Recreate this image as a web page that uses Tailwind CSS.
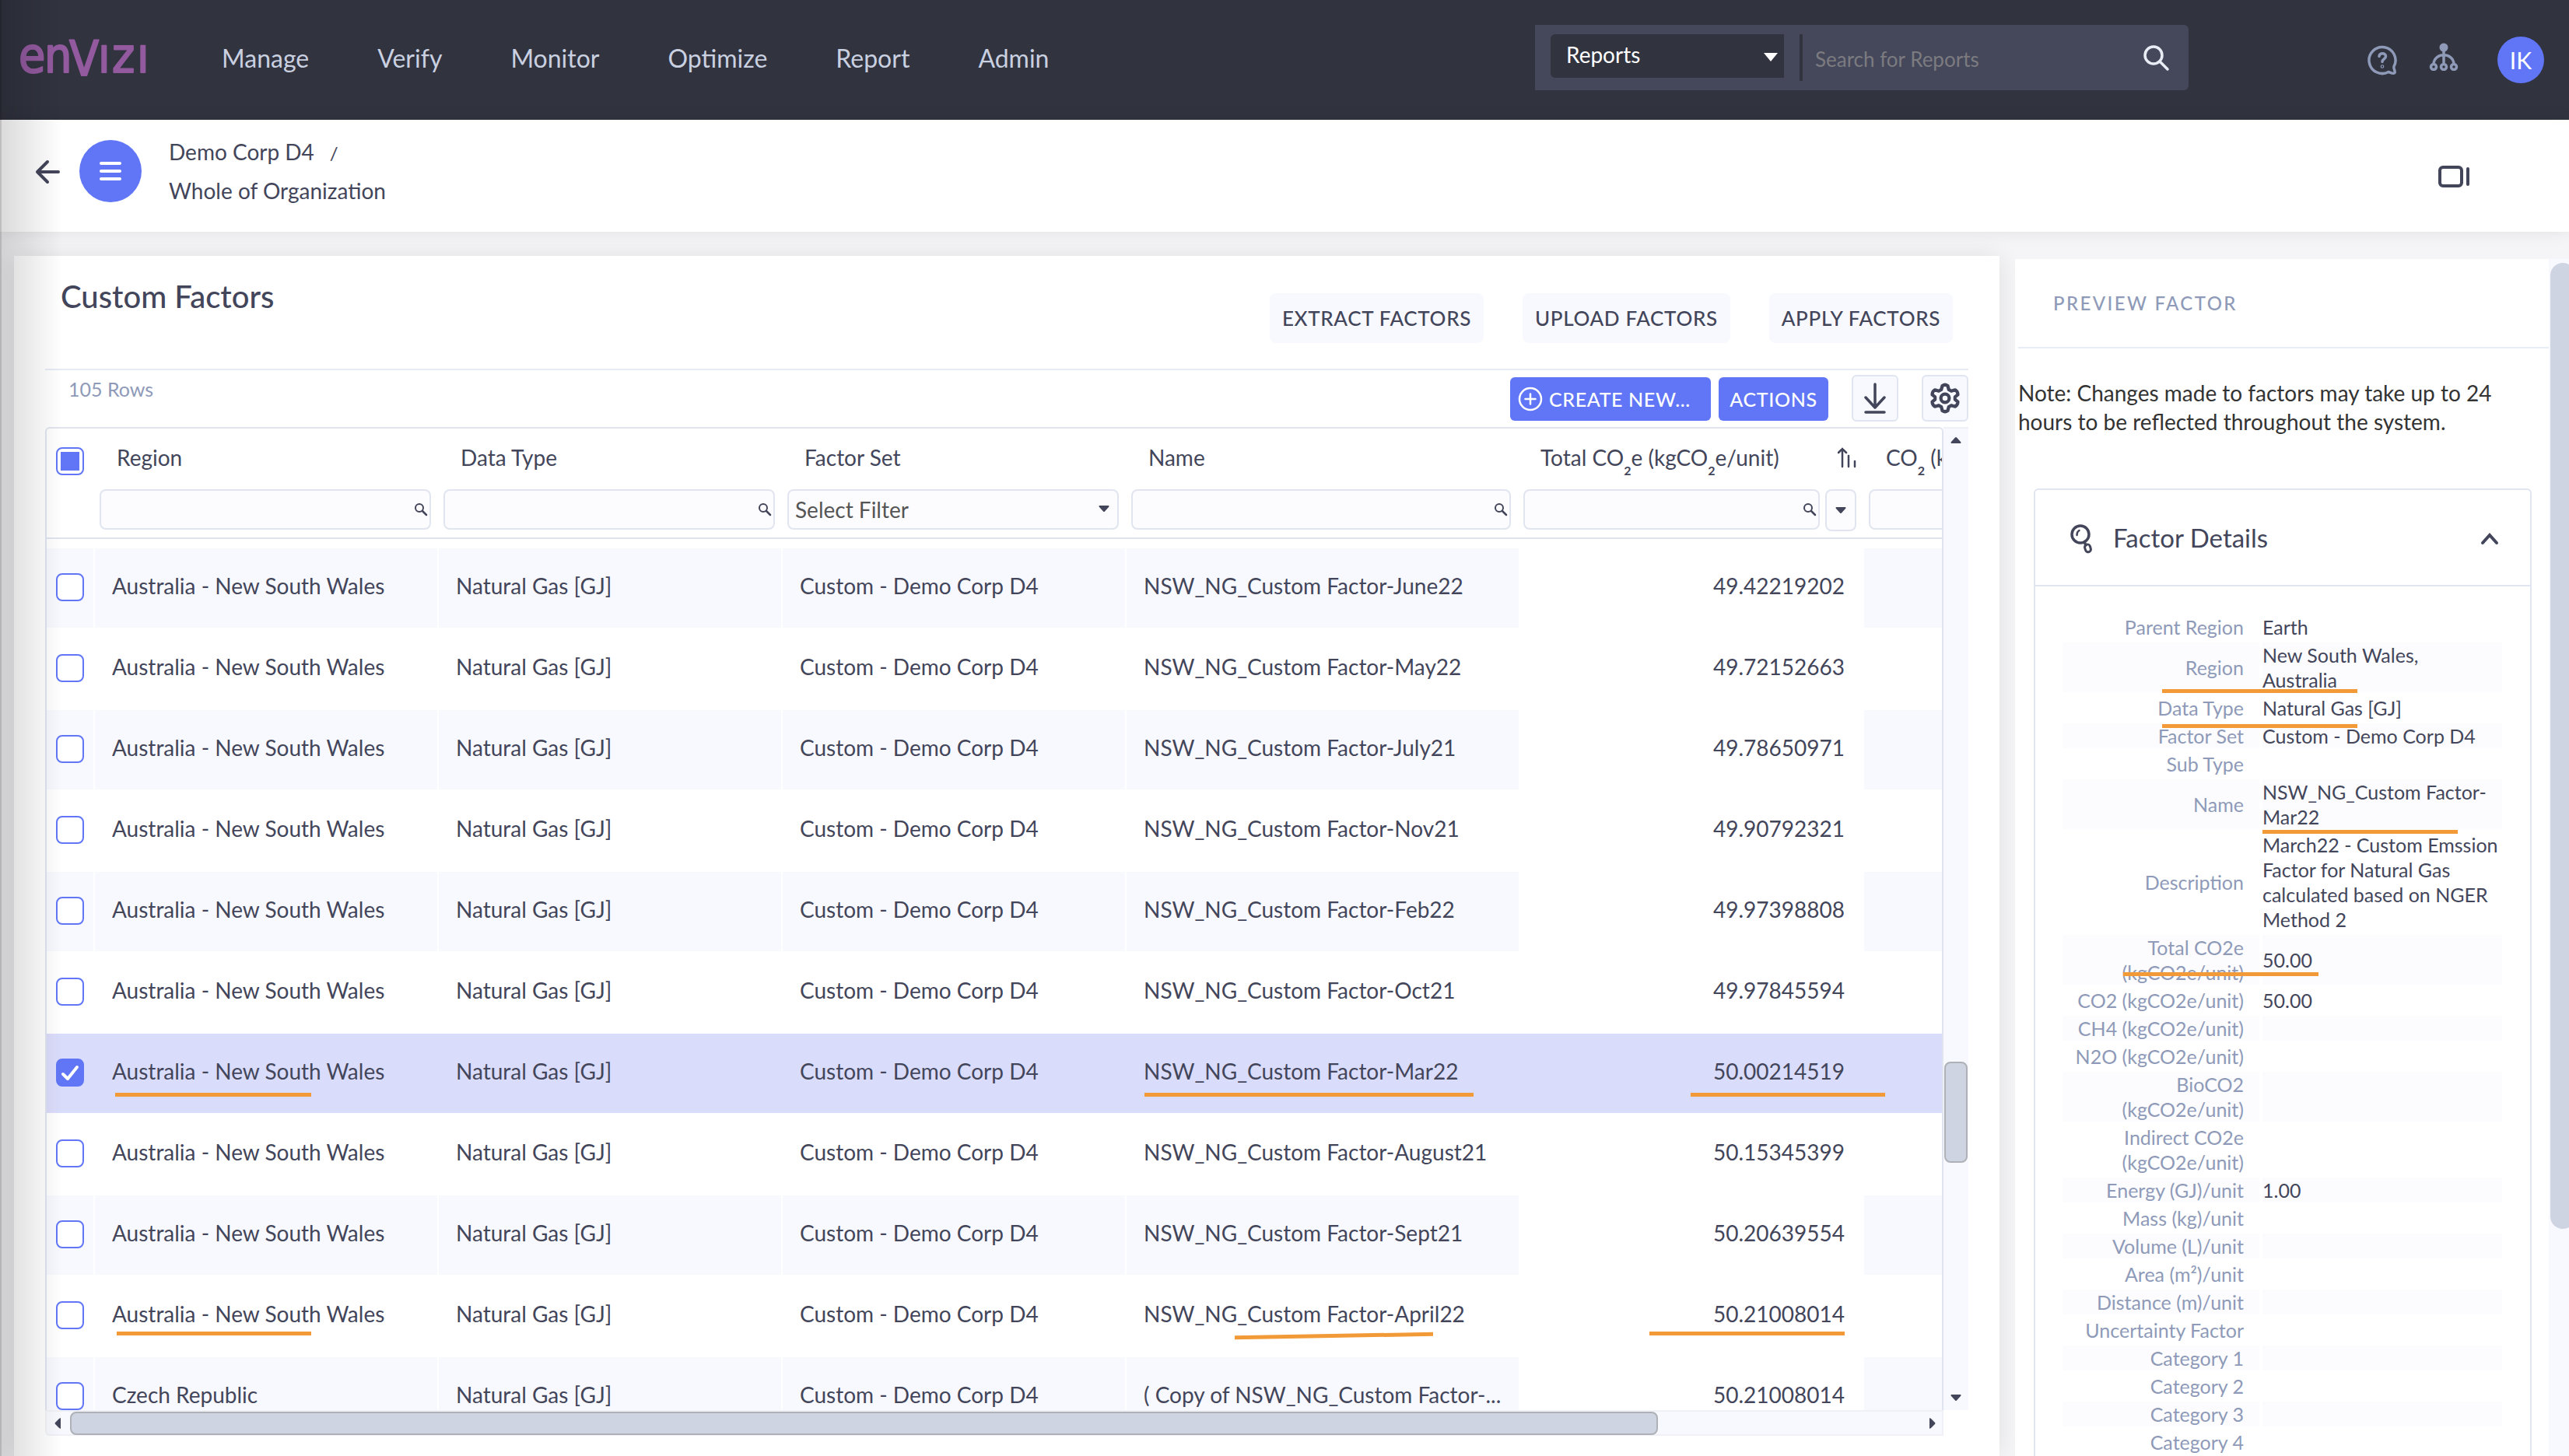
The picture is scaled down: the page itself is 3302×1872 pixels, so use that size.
<!DOCTYPE html>
<html lang="en">
<head>
<meta charset="utf-8">
<title>Custom Factors</title>
<script src="https://cdn.jsdelivr.net/npm/@tailwindcss/browser@4"></script>
</head>
<body class="h-screen overflow-hidden bg-[#f5f5f8] font-[Lato,sans-serif] text-[28px] leading-8 text-[#43465a]">
<svg class="hidden" aria-hidden="true">
  <symbol id="mag" viewBox="0 0 18 18"><circle cx="7" cy="7" r="5" fill="none" stroke="currentColor" stroke-width="2"/><path d="M11 11l5 5" stroke="currentColor" stroke-width="2.5" stroke-linecap="round"/></symbol>
  <symbol id="down" viewBox="0 0 14 8"><path d="M1 0h12q1 1 0 2L8 7.500q-1 1-2 0L1 2q-1-1 0-2z" fill="currentColor"/></symbol>
</svg>
<div class="relative flex h-full flex-col">

  <header class="flex h-[154px] shrink-0 items-center bg-[#31333f] text-[#c9d0e0]">
    <a href="#" aria-label="enVizi" class="ml-4">
      <svg class="h-20 w-[190px] overflow-visible" viewBox="16 35 190 80" fill="#935a9f" stroke="#935a9f" stroke-width="2" stroke-linejoin="round" font-family="'Liberation Sans Narrow','DejaVu Sans Condensed',sans-serif" font-size="62">
        <text x="24 57 89 126 144 176" y="91 91 95 91 91 91">enVızı</text>
      </svg>
    </a>
    <nav class="-mt-1 ml-[79px] flex gap-[88px] text-[32px]">
      <a href="#">Manage</a><a href="#">Verify</a><a href="#">Monitor</a><a href="#">Optimize</a><a href="#">Report</a><a href="#">Admin</a>
    </nav>
    <form class="mr-[229px] mb-[6px] ml-auto flex h-[84px] w-[840px] items-center rounded-r-md bg-[#45485b] pr-6 pl-5">
      <div class="relative mb-1 h-14 w-[300px]">
        <select aria-label="Search in" class="h-full w-full appearance-none rounded-l-md bg-[#31333f] pb-1 pl-5 text-white"><option>Reports</option></select>
        <svg class="absolute top-6 right-2 h-3 w-[18px] text-white" viewBox="0 0 18 12"><path d="M0 0h18L9 11z" fill="currentColor"/></svg>
      </div>
      <div class="mr-4 ml-5 h-[60px] w-1 bg-[#31333f]"></div>
      <input type="text" aria-label="Search for Reports" placeholder="Search for Reports" class="min-w-0 flex-1 pt-1 text-[26px] placeholder:text-[#7b7b80]">
      <button type="button" aria-label="Search"><svg class="size-9" viewBox="0 0 36 36" fill="none" stroke="#e8ecf4" stroke-width="3.500"><circle cx="15" cy="15" r="11"/><path d="M23 23l10 10" stroke-linecap="round"/></svg></button>
    </form>
    <div class="mr-8 flex items-center">
      <button aria-label="Help" class="mr-10"><svg class="size-10" viewBox="0 0 40 40" fill="none" stroke="#8e9ab8" stroke-width="3.500" stroke-linecap="round" stroke-linejoin="round"><path d="M28 35.500a17 17 0 1 1 7-7c-1 2 2 6 1 8s-5 0-8-1z"/><path d="M16 15.500c0-5 8.500-5 8.500 0 0 3.500-4.500 3-4.500 7"/><circle cx="20" cy="28.500" r=".6"/></svg></button>
      <button aria-label="Hierarchy" class="mr-[50px] mb-2"><svg class="h-9 w-[38px]" viewBox="0 0 38 36" fill="none" stroke="#8e9ab8" stroke-width="3.500"><circle cx="19" cy="6" r="5.500" fill="#8e9ab8" stroke="none"/><path d="M19 8v18M6 27c1-15 25-15 26 0"/><g fill="#31333f"><circle cx="6" cy="31" r="3.500"/><circle cx="19" cy="31" r="3.500"/><circle cx="32" cy="31" r="3.500"/></g></svg></button>
      <button class="size-[60px] rounded-full bg-[#6076f6] text-[30px] text-white">IK</button>
    </div>
  </header>

  <div class="z-10 flex h-36 shrink-0 items-start bg-white pt-[26px] shadow-[0_0_20px_rgba(0,0,0,0.09)]">
    <a href="#" aria-label="Back" class="mt-[25px] ml-[45px]"><svg class="h-8 w-[33px]" viewBox="0 0 33 32" fill="none" stroke="#43465a" stroke-width="4" stroke-linecap="round" stroke-linejoin="round"><path d="M30 16H3M16 3L3 16l13 13"/></svg></a>
    <button aria-label="Menu" class="ml-6 flex size-20 flex-col items-center justify-center gap-[6px] rounded-full bg-[#6076f6]"><span class="h-1 w-7 rounded-sm bg-white"></span><span class="h-1 w-7 rounded-sm bg-white"></span><span class="h-1 w-7 rounded-sm bg-white"></span></button>
    <div class="-mt-[10px] ml-[35px] leading-[50px]">
      <div><a href="#">Demo Corp D4</a><span class="ml-5 text-2xl">/</span></div>
      <div>Whole of Organization</div>
    </div>
    <button aria-label="Toggle side panel" class="mt-8 mr-[125px] ml-auto"><svg class="h-[30px] w-11" viewBox="0 0 44 30" fill="none" stroke="#43465a" stroke-width="4" stroke-linecap="round"><rect x="3" y="3" width="28" height="24" rx="4"/><path d="M39 5v20"/></svg></button>
  </div>

  <div class="flex min-h-0 flex-1">
    <main class="mt-[31px] ml-[18px] flex min-w-0 flex-1 flex-col bg-white pr-10 pb-[26px] pl-10 shadow-[0_0_30px_rgba(0,0,0,0.09)]">
      <div class="flex h-[145px] shrink-0 items-start justify-between">
        <h1 class="mt-[30px] ml-5 text-[40px] leading-[44px] font-medium">Custom Factors</h1>
        <div class="mt-12 mr-5 flex gap-[50px] text-[26px] font-medium tracking-wide">
          <button class="h-16 rounded-lg bg-[#f8f9fe] px-4">EXTRACT FACTORS</button>
          <button class="h-16 rounded-lg bg-[#f8f9fe] px-4">UPLOAD FACTORS</button>
          <button class="h-16 rounded-lg bg-[#f8f9fe] px-4">APPLY FACTORS</button>
        </div>
      </div>
      <div class="flex h-[75px] shrink-0 items-start border-t-2 border-[#e6eaf5]">
        <p class="mt-2 ml-[30px] text-[25px] text-[#8e9ab8]">105 Rows</p>
        <div class="mt-[6px] ml-auto flex items-center text-[25px] font-medium tracking-wide text-white">
          <button class="mt-[2px] flex h-14 w-[258px] items-center gap-2 rounded-md bg-[#6076f6] pl-[10px]"><svg class="size-[32px]" viewBox="0 0 32 32" fill="none" stroke="#fff" stroke-width="2.500" stroke-linecap="round"><circle cx="16" cy="16" r="14"/><path d="M16 9.500v13M9.500 16h13"/></svg>CREATE NEW...</button>
          <button class="mt-[2px] ml-[10px] h-14 w-[141px] rounded-md bg-[#6076f6]">ACTIONS</button>
          <button aria-label="Download" class="ml-[30px] flex size-[60px] items-center justify-center rounded-md border-2 border-[#e0e5f0] bg-[#f8f9fe]"><svg class="h-10 w-8" viewBox="0 0 32 40" fill="none" stroke="#43465a" stroke-width="3.500" stroke-linecap="round" stroke-linejoin="round"><path d="M16 2v29M4 19l12 13 12-13M4 38h24"/></svg></button>
          <button aria-label="Settings" class="ml-[30px] flex size-[60px] items-center justify-center rounded-md border-2 border-[#e0e5f0] bg-[#f8f9fe]"><svg class="size-[46px]" viewBox="0 0 24 24" fill="none" stroke="#43465a" stroke-width="2.200" stroke-linejoin="round"><circle cx="12" cy="12" r="2.800"/><path d="M10.200 3.600Q12 2.400 13.800 3.600L14.500 6.200L16.200 7.200L18.800 6.400Q20.600 7.500 20.600 9.600L18.700 11.200V12.800L20.600 14.400Q20.600 16.500 18.800 17.600L16.200 16.800L14.500 17.800L13.800 20.400Q12 21.600 10.200 20.400L9.500 17.800L7.800 16.800L5.200 17.600Q3.400 16.500 3.400 14.400L5.300 12.800V11.200L3.400 9.600Q3.400 7.500 5.200 6.400L7.800 7.200L9.500 6.200z"/></svg></button>
        </div>
      </div>
      <div class="flex min-h-0 flex-1">
        <div class="flex min-w-0 flex-1 flex-col">
          <div class="min-h-0 flex-1 overflow-hidden rounded-t-md border-x-2 border-t-2 border-[#e0e4ef]">
            <table class="w-full table-fixed border-separate border-spacing-0">
              <colgroup><col class="w-[62px]"><col class="w-[442px]"><col class="w-[442px]"><col class="w-[442px]"><col class="w-[504px]"><col class="w-[444px]"><col></colgroup>
              <thead class="text-left">
                <tr id="head"></tr>
              </thead>
              <tbody id="rows"><tr class="h-3"><td colspan="7"></td></tr></tbody>
            </table>
          </div>
          <div class="flex h-[33px] shrink-0 items-center rounded-bl-md border-2 border-[#f0f1f6] bg-[#f8f9fe]">
            <svg class="ml-[10px] h-[14px] w-2" viewBox="0 0 8 14"><path d="M8 0v14L6 13 1 8q-1-1 0-2L6 1z" fill="#43465a"/></svg>
            <div class="ml-3 h-[30px] w-[2041px] rounded-lg border-2 border-[#aeb1b6] bg-[#ced4e2]"></div>
            <svg class="mr-2 ml-auto h-[14px] w-2" viewBox="0 0 8 14"><path d="M0 0v14L2 13l5-5q1-1 0-2L2 1z" fill="#43465a"/></svg>
          </div>
        </div>
        <div class="mb-[33px] flex w-8 flex-col items-center border-t-2 border-[#f0f1f6] bg-[#f8f9fe]">
          <svg class="mt-[11px] h-2 w-[14px] rotate-180 text-[#43465a]"><use href="#down"/></svg>
          <div class="mt-[795px] h-[130px] w-[30px] rounded-lg border-2 border-[#aeb1b6] bg-[#ced4e2]"></div>
          <svg class="mt-auto mb-3 h-2 w-[14px] text-[#43465a]"><use href="#down"/></svg>
        </div>
      </div>
    </main>

    <aside class="mt-[35px] ml-5 flex w-[712px] shrink-0 bg-white">
      <div class="ml-1 min-w-0 flex-1 overflow-hidden">
        <h2 class="flex h-[115px] items-center border-b-2 border-[#e8ecf5] pl-[45px] text-2xl font-medium tracking-widest text-[#8e9ab8]">PREVIEW FACTOR</h2>
        <p class="mt-[39px] h-[141px] leading-[37px] text-[#333]">Note: Changes made to factors may take up to 24<br>hours to be reflected throughout the system.</p>
        <section class="mr-[22px] ml-5 rounded-md border-2 border-[#e0e5f0]">
          <h3 class="flex h-[124px] items-center border-b-2 border-[#e0e5f0] pr-10 pl-11 text-[33px]">
            <svg class="mt-1 mr-6 h-[38px] w-8" viewBox="0 0 32 38" fill="none" stroke="#43465a" stroke-width="3.500" stroke-linecap="round"><circle cx="14" cy="13" r="11"/><path d="M9.500 14c0-3 1-5 3-6" stroke-width="2.500"/><path d="M19 23l2 4"/><rect x="20" y="26" width="7" height="10" rx="3.500" transform="rotate(-18 23 31)" stroke-width="3"/></svg>
            Factor Details
            <button aria-label="Collapse" class="mt-1 ml-auto"><svg class="h-4 w-6" viewBox="0 0 24 16" fill="none" stroke="#43465a" stroke-width="4" stroke-linecap="round"><path d="M3 13l9-10 9 10"/></svg></button>
          </h3>
          <table class="mt-8 ml-[31px] w-[573px] table-fixed border-separate border-spacing-x-1 border-spacing-y-1 text-[25px] leading-8">
            <colgroup><col class="w-[253px]"><col></colgroup>
            <tbody id="details"></tbody>
          </table>
        </section>
      </div>
      <div class="w-[26px] shrink-0 overflow-hidden bg-[#f8f9fe] pt-[5px]"><div class="ml-[2px] h-[1242px] w-8 rounded-full bg-[#ced4e2]"></div></div>
    </aside>
  </div>
  <div class="pointer-events-none absolute inset-y-0 left-0 z-20 w-20 border-l-2 border-black/25 bg-linear-to-r from-black/14 to-transparent"></div>
</div>
<script>
const mag = (pos) => `<svg class="${pos} absolute top-[17px] size-[18px]"><use href="#mag"/></svg>`;
const box = "h-[52px] w-full rounded-lg border-2 border-[#e0e5f0] bg-[#fcfcfe]";
const textFilter = (n) => `<div class="relative flex-1"><input type="text" aria-label="Filter ${n}" class="${box} pr-8 pl-2">${mag("right-1")}</div>`;
const sub = '<sub class="relative top-3 align-baseline text-base leading-none font-bold">2</sub>';
const cols = [
  ["Region", textFilter("Region")],
  ["Data Type", textFilter("Data Type")],
  ["Factor Set", `<div class="relative flex-1"><select aria-label="Filter Factor Set" class="${box} appearance-none pl-2 text-[#555]"><option>Select Filter</option></select><svg class="absolute top-[21px] right-3 h-2 w-[14px]"><use href="#down"/></svg></div>`],
  ["Name", textFilter("Name")],
  [`Total CO${sub}e (kgCO${sub}e/unit)<svg class="ml-auto h-7 w-6" viewBox="0 0 24 28" fill="none" stroke="#43465a" stroke-width="2.500" stroke-linecap="round"><path d="M6 26V3M1 8l5-5 5 5M14 26V12M22 26v-7"/></svg>`,
   textFilter("Total") + `<button aria-label="Filter options" class="ml-[7px] flex h-[54px] w-10 items-center justify-center rounded-lg border-2 border-[#e0e5f0] bg-[#fcfcfe]"><svg class="h-2 w-[14px]"><use href="#down"/></svg></button>`],
  [`CO${sub} (kgCO${sub}e/unit)`, `<input type="text" aria-label="Filter CO2" class="h-[52px] w-[350px] shrink-0 rounded-lg border-2 border-[#e0e5f0] bg-[#fcfcfe]">`]
];
document.getElementById("head").innerHTML =
  `<th class="h-[142px] border-b-2 border-[#e0e4ef] pt-6 pl-3 align-top"><span class="relative block size-9"><input type="checkbox" aria-label="Select all" class="block size-9 appearance-none rounded-lg border-2 border-[#6076f6] bg-white"><span class="pointer-events-none absolute inset-[6px] bg-[#6076f6]"></span></span></th>` +
  cols.map(([label, filter]) => `<th class="h-[142px] overflow-hidden border-b-2 border-[#e0e4ef] pt-[17px] pr-2.5 pl-1.5 align-top font-normal"><div class="mb-[21px] flex h-10 items-center pl-[22px] whitespace-nowrap"><span>${label.split("<svg")[0]}</span>${label.includes("<svg") ? "<svg" + label.split("<svg")[1] : ""}</div><div class="flex h-[52px]">${filter}</div></th>`).join("");

const nsw = "Australia - New South Wales", f = "NSW_NG_Custom Factor-";
const data = [
  [nsw, f + "June22", "49.42219202"], [nsw, f + "May22", "49.72152663"], [nsw, f + "July21", "49.78650971"],
  [nsw, f + "Nov21", "49.90792321"], [nsw, f + "Feb22", "49.97398808"], [nsw, f + "Oct21", "49.97845594"],
  [nsw, f + "Mar22", "50.00214519"], [nsw, f + "August21", "50.15345399"], [nsw, f + "Sept21", "50.20639554"],
  [nsw, f + "April22", "50.21008014"], ["Czech Republic", "( Copy of NSW_NG_Custom Factor-...", "50.21008014"]
];
const mark = (c) => `<span class="absolute h-[5px] bg-[#f19a37] ${c}"></span>`;
const marks = {
  6: [mark("top-[76px] left-[26px] w-[252px]"), mark("top-[76px] left-[23px] w-[423px]"), mark("top-[76px] left-[221px] w-[250px]")],
  9: [mark("top-[71px] left-[28px] w-[250px]"), mark("top-[74px] left-[139px] w-[255px] -rotate-1"), mark("top-[71px] left-[168px] w-[251px]")]
};
document.getElementById("rows").innerHTML += data.map(([region, name, total], i) => {
  const on = i === 6, m = marks[i] || ["", "", ""];
  const bg = on ? "bg-[#dadcfb]" : i % 2 ? "bg-white" : "bg-[#f8f9fe]";
  const td = `relative h-[104px] border-b-2 border-b-white pb-1.5 pl-[22px] whitespace-nowrap ${bg}`;
  const sep = on ? "" : "border-r-2 border-r-white";
  const tick = on ? '<svg class="pointer-events-none absolute inset-0" viewBox="0 0 36 36" fill="none" stroke="#fff" stroke-width="4" stroke-linecap="round" stroke-linejoin="round"><path d="M9 20l6 6 12-15"/></svg>' : "";
  return `<tr><td class="h-[104px] border-b-2 border-b-white pb-[2px] pl-3 ${bg} ${sep}"><span class="relative block size-9"><input type="checkbox" aria-label="Select ${name}" ${on ? "checked" : ""} class="block size-9 appearance-none rounded-lg border-2 border-[#6076f6] bg-white checked:bg-[#6076f6]">${tick}</span></td>` +
    `<td class="${td} ${sep}">${region}${m[0]}</td><td class="${td} ${sep}">Natural Gas [GJ]</td><td class="${td} ${sep}">Custom - Demo Corp D4</td><td class="${td}">${name}${m[1]}</td>` +
    `<td class="relative z-10 h-[104px] border-b-2 border-b-white pr-[25px] pb-1.5 text-right ${on ? bg : "bg-white"}">${total}${m[2]}</td><td class="${td}"></td></tr>`;
}).join("");

const line = (c) => `<span class="absolute z-10 h-[5px] w-[251px] bg-[#f19a37] ${c}"></span>`;
document.getElementById("details").innerHTML = [
  ["Parent Region", "Earth"], ["Region", "New South Wales,<br>Australia", line("top-[60px] left-[128px]")],
  ["Data Type", "Natural Gas [GJ]", line("top-[37px] left-[128px]")], ["Factor Set", "Custom - Demo Corp D4"], ["Sub Type", ""],
  ["Name", "NSW_NG_Custom Factor-<br>Mar22", line("top-[65px] left-[257px]")],
  ["Description", "March22 - Custom Emssion<br>Factor for Natural Gas<br>calculated based on NGER<br>Method 2"],
  ["Total CO2e<br>(kgCO2e/unit)", "50.00", line("top-12 left-[78px]")], ["CO2 (kgCO2e/unit)", "50.00"], ["CH4 (kgCO2e/unit)", ""], ["N2O (kgCO2e/unit)", ""],
  ["BioCO2<br>(kgCO2e/unit)", ""], ["Indirect CO2e<br>(kgCO2e/unit)", ""], ["Energy (GJ)/unit", "1.00"], ["Mass (kg)/unit", ""],
  ["Volume (L)/unit", ""], ["Area (m²)/unit", ""], ["Distance (m)/unit", ""], ["Uncertainty Factor", ""],
  ["Category 1", ""], ["Category 2", ""], ["Category 3", ""], ["Category 4", ""]
].map(([k, v, l], i) => `<tr class="${i % 2 ? "bg-[#fcfcfe]" : ""}"><th class="relative pr-5 text-right font-normal whitespace-nowrap text-[#8e9ab8]">${k}${l || ""}</th><td class="whitespace-nowrap">${v}</td></tr>`).join("");
</script>
</body>
</html>
